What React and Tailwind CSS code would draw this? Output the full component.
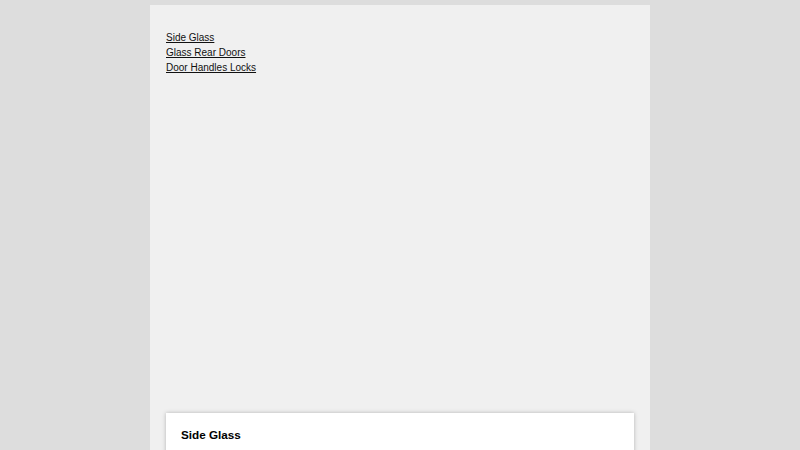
import React from 'react';

const links = ['Side Glass', 'Glass Rear Doors', 'Door Handles Locks'];

const App = () => {
    return (
        <div className="min-h-screen bg-[#dddddd] pt-[5px]" style={{ fontFamily: '"Liberation Sans", Arial, sans-serif' }}>
            <div className="mx-auto w-[500px] min-h-[445px] bg-[#f0f0f0] px-4 pt-[25px] pb-4">
                {/* Links list */}
                <ul className="flex flex-col text-[10px] leading-[15px] text-[#111]">
                    {links.map((label) => (
                        <li key={label}>
                            <a href="#" className="underline">{label}</a>
                        </li>
                    ))}
                </ul>

                {/* Section card */}
                <div className="mt-[338px] bg-white px-[15px] pt-[13px] pb-6 shadow-[0_0_4px_rgba(0,0,0,0.25)]">
                    <h3 className="text-[11.7px] font-bold text-black">Side Glass</h3>
                </div>
            </div>
        </div>
    );
};

export default App;
